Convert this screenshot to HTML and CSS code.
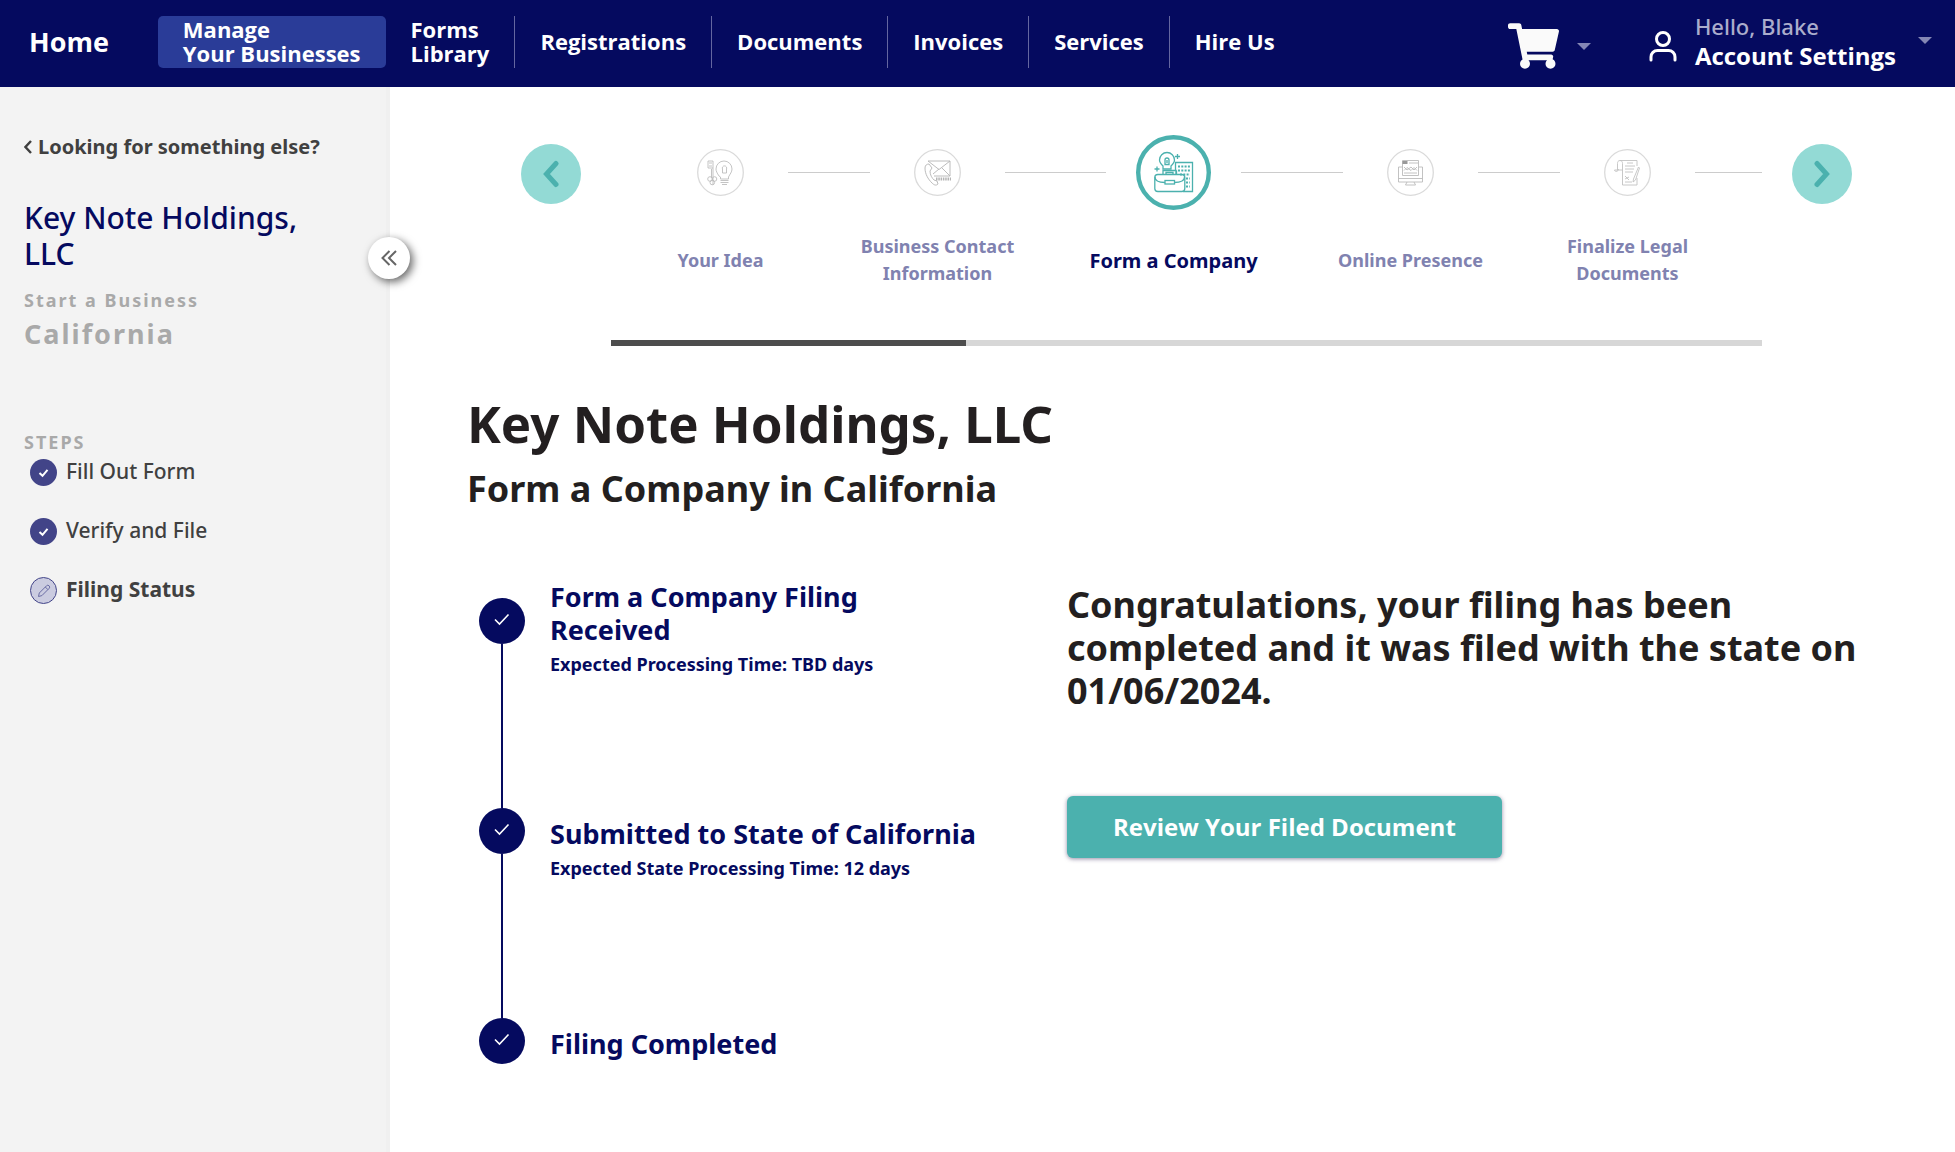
FILE: index.html
```html
<!DOCTYPE html>
<html lang="en">
<head>
<meta charset="utf-8">
<meta name="viewport" content="width=device-width, initial-scale=1">
<title>Filing Status - Key Note Holdings, LLC</title>
<link rel="stylesheet" href="styles.css">
</head>
<body>
<header class="topbar">
  <a class="home" href="#">Home</a>
  <nav class="nav" aria-label="Main">
    <a class="nav-item nav-item-active" href="#">Manage<br>Your Businesses</a>
    <a class="nav-item" href="#">Forms<br>Library</a>
    <a class="nav-item nav-item-ruled" href="#">Registrations</a>
    <a class="nav-item nav-item-ruled" href="#">Documents</a>
    <a class="nav-item nav-item-ruled" href="#">Invoices</a>
    <a class="nav-item nav-item-ruled" href="#">Services</a>
    <a class="nav-item nav-item-ruled" href="#">Hire Us</a>
  </nav>
  <div class="actions">
    <button class="cart" type="button" aria-label="Cart">
      <svg width="51" height="46" viewBox="0 0 576 512" fill="#fafafa" aria-hidden="true"><path d="M528.12 301.319l47.273-208C578.806 78.301 567.391 64 551.99 64H159.208l-9.166-44.81C147.758 8.021 137.93 0 126.529 0H24C10.745 0 0 10.745 0 24v16c0 13.255 10.745 24 24 24h69.883l70.248 343.435C147.325 417.1 136 435.222 136 456c0 30.928 25.072 56 56 56s56-25.072 56-56c0-15.674-6.447-29.835-16.824-40h209.647C430.447 426.165 424 440.326 424 456c0 30.928 25.072 56 56 56s56-25.072 56-56c0-22.172-12.888-41.332-31.579-50.405l5.517-24.276c3.413-15.018-8.002-29.319-23.403-29.319H218.117l-6.545-32h293.145c11.206 0 20.92-7.754 23.403-18.681z"/></svg>
      <span class="caret"></span>
    </button>
    <button class="account" type="button">
      <svg width="28" height="32" viewBox="0 0 28 32" fill="none" stroke="#fff" stroke-width="3" stroke-linecap="round" aria-hidden="true"><circle cx="14" cy="9" r="6.5"/><path d="M2 30v-3a6.500 6.500 0 0 1 6.500-6.500h11a6.500 6.500 0 0 1 6.500 6.500v3"/></svg>
      <span class="account-text"><span class="hello">Hello, Blake</span><span class="settings">Account Settings</span></span>
      <span class="caret caret-high"></span>
    </button>
  </div>
</header>
<div class="layout">
  <aside class="sidebar">
    <a class="back" href="#"><svg width="8" height="14" viewBox="0 0 8 14" fill="none" stroke="#404040" stroke-width="2.400" aria-hidden="true"><path d="M7 1 1.500 7 7 13"/></svg>Looking for something else?</a>
    <h2 class="company">Key Note Holdings, LLC</h2>
    <p class="eyebrow">Start a Business</p>
    <p class="state">California</p>
    <h3 class="eyebrow steps-title">STEPS</h3>
    <ul class="steps">
      <li><a class="step" href="#"><svg width="27" height="27" viewBox="0 0 27 27" aria-hidden="true"><circle cx="13.500" cy="13.500" r="13.500" fill="#424488"/><path d="m9.500 14 3 2.800 5-6" fill="none" stroke="#fff" stroke-width="2"/></svg>Fill Out Form</a></li>
      <li><a class="step" href="#"><svg width="27" height="27" viewBox="0 0 27 27" aria-hidden="true"><circle cx="13.500" cy="13.500" r="13.500" fill="#424488"/><path d="m9.500 14 3 2.800 5-6" fill="none" stroke="#fff" stroke-width="2"/></svg>Verify and File</a></li>
      <li><a class="step step-current" href="#"><svg width="27" height="27" viewBox="0 0 27 27" aria-hidden="true"><circle cx="13.500" cy="13.500" r="13" fill="#cbcce0" stroke="#424488"/><path d="m8.500 19.500.8-3.500 7.200-7.200a1.800 1.800 0 0 1 2.600 2.600l-7.200 7.200zM15.300 10l2.600 2.600" fill="none" stroke="#6a6ca4"/></svg>Filing Status</a></li>
    </ul>
    <button class="collapse" type="button" aria-label="Collapse sidebar"><svg width="16" height="16" viewBox="0 0 16 16" fill="none" stroke="#666" stroke-width="2" aria-hidden="true"><path d="M8.500 1 1.500 8l7 7M15 1 8 8l7 7"/></svg></button>
  </aside>
  <main class="main">
    <section class="carousel" aria-label="Progress">
      <button class="arrow" type="button" aria-label="Previous"><svg width="16" height="28" viewBox="0 0 16 28" fill="none" stroke="#4bb1ae" stroke-width="5" stroke-linecap="round" aria-hidden="true"><path d="M13 3.500 3.500 14 13 24.500"/></svg></button>
      <div class="track">
        <ol class="stages">
          <li class="stage">
            <span class="disc"><svg width="47" height="47" viewBox="0 0 47 47" fill="none" stroke="#bdbdbd" stroke-width=".9" aria-hidden="true"><circle cx="23.500" cy="23.500" r="22.800" stroke="#dadada" stroke-width="1.300"/><path d="M11 12h5v24M11 12v7h5M12 14h3M12 17h3M14.500 20v9M22 27c-2-3-3-5-3-7a8 8 0 0 1 16 0c0 3-2 5-3.500 8v2h-8v-2zM23.500 31.500h8M23.500 33.500h8M25 35.500h5M25.500 24v-4a2.200 2.200 0 1 1 4 0v4z"/><circle cx="13" cy="30" r="2.300"/><circle cx="17.500" cy="30" r="2.300"/><circle cx="15.300" cy="33.500" r="2.300"/></svg></span>
            <span class="label">Your Idea</span>
          </li>
          <li class="link" style="flex-grow: 82" aria-hidden="true"></li>
          <li class="stage">
            <span class="disc"><svg width="47" height="47" viewBox="0 0 47 47" fill="none" stroke="#b4b4b4" stroke-width=".9" aria-hidden="true"><circle cx="23.500" cy="23.500" r="22.800" stroke="#dadada" stroke-width="1.300"/><path d="M14 12h22v15H20M14 12l11 8.500L36 12M36 27l-8-8M19 25l6-5M11 19c0-3 2-4 4-4l3 4-2 3c0 4 2 7 4 9l3 1 1 3c-2 2-4 1-6-1-4-4-7-9-7-15z"/><path d="M22 30h15" stroke-width="3" stroke-dasharray="1.500 .8"/></svg></span>
            <span class="label">Business Contact<br>Information</span>
          </li>
          <li class="link" style="flex-grow: 101" aria-hidden="true"></li>
          <li class="stage stage-active">
            <span class="disc"><svg width="75" height="75" viewBox="0 0 75 75" fill="none" stroke="#4bb1ae" stroke-width="1.300" aria-hidden="true"><circle cx="37.500" cy="37.500" r="35.300" stroke-width="4.400"/><path d="M27 34v-3c-2-2-3.500-3.500-3.500-6a7.500 7.500 0 0 1 15 0c0 2.500-1.500 4-3.500 6v3z"/><path d="M29 29.500v-4.500a2 2 0 1 1 4 0v4.500zM31 25v3M27 39.500v-4h13v4M30 39.500v-2h7v2"/><rect x="18.800" y="39.500" width="30" height="17" rx="3"/><path d="M19 42c0 4 4 5.500 10 5.500h9c6 0 10.500-1.500 10.500-5.500M41.500 19v5M39 21.500h5M21 31.500v5M18.500 34h5M39.500 35v-7.500h17V56.500H47M40.500 35.500v4"/><rect x="29" y="45.500" width="9.500" height="3.500" fill="#fff"/><path d="M42 31.500h12M42 35.500h12M44 39.500h10M50 43.500h4M50 47.500h4M50 51.500h4" stroke-width="2" stroke-dasharray="2 1.300"/></svg></span>
            <span class="label">Form a Company</span>
          </li>
          <li class="link" style="flex-grow: 102" aria-hidden="true"></li>
          <li class="stage">
            <span class="disc"><svg width="47" height="47" viewBox="0 0 47 47" fill="none" stroke="#bbb" stroke-width=".9" aria-hidden="true"><circle cx="23.500" cy="23.500" r="22.800" stroke="#dadada" stroke-width="1.300"/><path d="M15.500 11.500h16v15h-16zM15.500 18h-4v15h24V18h-4M11.500 29.500h24M20 33l-1.500 3h10L27 33M17 18l3 3 4-3 3 3 3-3M17 21.500l3-3 4 3 3-3 3 3M17 24h13M22 14h9"/><path d="M15.500 13.500h5" stroke="#999" stroke-width="3"/></svg></span>
            <span class="label">Online Presence</span>
          </li>
          <li class="link" style="flex-grow: 82" aria-hidden="true"></li>
          <li class="stage">
            <span class="disc"><svg width="47" height="47" viewBox="0 0 47 47" fill="none" stroke="#c2c2c2" stroke-width=".9" aria-hidden="true"><circle cx="23.500" cy="23.500" r="22.800" stroke="#dadada" stroke-width="1.300"/><path d="M33 17v-5.500H16c-2 0-2.500 1.500-2.500 3V21h-3c0 2 4 2 4-1M18.500 21v15H33v-7M16 11.500c2 0 2.500 1.500 2.500 3V21h-5M23 14h6M21 17h10M21 20h9M21 23h8M21 33h7M21 27l4 4M21 30l4-2M34.500 18l-5 12-.5 3 2.500-2 4-12z"/></svg></span>
            <span class="label">Finalize Legal<br>Documents</span>
          </li>
          <li class="link" style="flex-grow: 67" aria-hidden="true"></li>
        </ol>
        <div class="progress"><div class="progress-fill" style="width: 30.8%"></div></div>
      </div>
      <button class="arrow" type="button" aria-label="Next"><svg width="16" height="28" viewBox="0 0 16 28" fill="none" stroke="#4bb1ae" stroke-width="5" stroke-linecap="round" aria-hidden="true"><path d="M3 3.500 12.500 14 3 24.500"/></svg></button>
    </section>
    <h1 class="title">Key Note Holdings, LLC</h1>
    <h2 class="subtitle">Form a Company in California</h2>
    <div class="columns">
      <ol class="timeline">
        <li class="event event-tall">
          <div class="marker"><svg class="dot" width="46" height="46" viewBox="0 0 46 46" aria-hidden="true"><circle cx="23" cy="23" r="23" fill="#050a5f"/><path d="m16 21.500 4.500 4.500 9-9.500" fill="none" stroke="#fff" stroke-width="1.600"/></svg></div>
          <div class="event-text"><h3>Form a Company Filing<br>Received</h3><p>Expected Processing Time: TBD days</p></div>
        </li>
        <li class="event">
          <div class="marker"><svg class="dot" width="46" height="46" viewBox="0 0 46 46" aria-hidden="true"><circle cx="23" cy="23" r="23" fill="#050a5f"/><path d="m16 21.500 4.500 4.500 9-9.500" fill="none" stroke="#fff" stroke-width="1.600"/></svg></div>
          <div class="event-text"><h3>Submitted to State of California</h3><p>Expected State Processing Time: 12 days</p></div>
        </li>
        <li class="event">
          <div class="marker"><svg class="dot" width="46" height="46" viewBox="0 0 46 46" aria-hidden="true"><circle cx="23" cy="23" r="23" fill="#050a5f"/><path d="m16 21.500 4.500 4.500 9-9.500" fill="none" stroke="#fff" stroke-width="1.600"/></svg></div>
          <div class="event-text"><h3>Filing Completed</h3></div>
        </li>
      </ol>
      <section class="result">
        <h2 class="message">Congratulations, your filing has been completed and it was filed with the state on 01/06/2024.</h2>
        <button class="review" type="button">Review Your Filed Document</button>
      </section>
    </div>
  </main>
</div>
</body>
</html>
```

FILE: styles.css
```css
* { box-sizing: border-box; }

body {
  margin: 0;
  min-height: 100vh;
  display: flex;
  flex-direction: column;
  font-family: "Noto Sans", "Open Sans", sans-serif;
  color: #231f20;
  background: #fff;
}

h1, h2, h3, p, ul, ol { margin: 0; padding: 0; }
ul, ol { list-style: none; }
a { color: inherit; text-decoration: none; }
svg { display: block; flex: none; }

button {
  padding: 0;
  border: 0;
  background: none;
  color: inherit;
  font-family: inherit;
  cursor: pointer;
}

/* Top bar */
.topbar {
  display: flex;
  align-items: flex-start;
  padding: 16px 23px 19px 29px;
  background: #050a5f;
  color: #fff;
  white-space: nowrap;
}

.home,
.nav-item,
.settings,
.review {
  font-family: "Open Sans", "Noto Sans", sans-serif;
  font-weight: 700;
}

.home {
  margin-right: 49px;
  font-size: 27px;
  line-height: 52px;
}

.nav { display: flex; }

.nav-item {
  display: flex;
  align-items: center;
  height: 52px;
  padding: 0 25px 2px;
  font-size: 22px;
  line-height: 24px;
}

.nav-item-active {
  border-radius: 5px;
  background: #2a3c98;
}

.nav-item-ruled { border-left: 1px solid #6466a0; }

.actions {
  display: flex;
  align-items: center;
  gap: 58px;
  height: 52px;
  margin-left: auto;
}

.cart, .account {
  display: flex;
  align-items: center;
  padding-top: 8px;
}

.cart { gap: 18px; }

.caret {
  border: 7px solid transparent;
  border-top-color: #8587b5;
  border-bottom: 0;
}

.caret-high { margin: 0 0 12px 22px; }

.account-text {
  display: flex;
  flex-direction: column;
  margin: 0 0 11px 18px;
  line-height: 29px;
  text-align: left;
}

.hello { font-size: 22px; font-weight: 500; color: #abadcc; }
.settings { font-size: 24px; }

.layout {
  display: flex;
  flex: 1;
}

/* Sidebar */
.sidebar {
  position: relative;
  flex: none;
  width: 390px;
  padding: 46px 60px 40px 24px;
  border-right: 4px solid #f0f0f0;
  background: #f3f3f3;
}

.back {
  display: flex;
  align-items: center;
  gap: 6px;
  font-size: 20px;
  font-weight: 700;
  line-height: 28px;
  color: #404040;
  white-space: nowrap;
}

.company {
  margin-top: 39px;
  font-size: 30px;
  font-weight: 500;
  line-height: 36px;
  color: #050a5f;
}

.eyebrow {
  margin-top: 16px;
  font-size: 18px;
  font-weight: 700;
  line-height: 24px;
  letter-spacing: 2px;
  color: #a9a9a9;
}

.state {
  margin-top: 4px;
  font-size: 27px;
  font-weight: 700;
  line-height: 36px;
  letter-spacing: 2px;
  color: #a9a9a9;
}

.steps-title { margin-top: 78px; }

.steps {
  display: flex;
  flex-direction: column;
  gap: 32px;
  padding: 5px 0 0 6px;
}

.step {
  display: flex;
  gap: 9px;
  height: 27px;
  font-size: 21px;
  font-weight: 500;
  line-height: 24px;
  color: #404040;
}

.step-current { font-weight: 700; }

.collapse {
  position: absolute;
  top: 150px;
  right: -24px;
  display: grid;
  place-items: center;
  width: 42px;
  height: 42px;
  border-radius: 50%;
  background: #fff;
  box-shadow: 3px 3px 8px rgba(0, 0, 0, .6);
}

/* Main */
.main {
  flex: 1;
  min-width: 0;
  padding: 48px 77px 60px;
}

.carousel {
  display: flex;
  gap: 30px;
  padding: 0 26px 0 54px;
}

.arrow {
  display: grid;
  place-items: center;
  flex: none;
  width: 60px;
  height: 60px;
  margin-top: 9px;
  border-radius: 50%;
  background: #93dad5;
}

.track { flex: 1; min-width: 0; }

.stages {
  display: flex;
  padding-left: 42px;
}

.stage {
  display: flex;
  flex: none;
  flex-direction: column;
  align-items: center;
  width: 135px;
}

.disc {
  display: grid;
  place-items: center;
  height: 75px;
}

.label {
  display: flex;
  align-items: center;
  height: 54px;
  margin-top: 23px;
  font-size: 18px;
  font-weight: 700;
  line-height: 27px;
  color: #8082b0;
  text-align: center;
  white-space: nowrap;
}

.stage-active .label {
  font-size: 20px;
  color: #050a5f;
}

.link {
  flex: 1 1 0;
  height: 1px;
  margin-top: 37px;
  background: #ccc;
}

.progress {
  height: 6px;
  margin-top: 53px;
  background: #d7d7d7;
}

.progress-fill {
  height: 100%;
  background: #4d4d4d;
}

.title {
  margin-top: 47px;
  font-size: 51px;
  font-weight: 700;
  line-height: 60px;
}

.subtitle {
  margin-top: 14px;
  font-size: 36px;
  font-weight: 700;
  line-height: 44px;
}

.columns {
  display: grid;
  grid-template-columns: 600fr 811fr;
  margin-top: 69px;
}

.event {
  display: flex;
  gap: 25px;
  min-height: 210px;
  padding-left: 12px;
  color: #050a5f;
}

.event-tall { min-height: 228px; }
.event:last-child { min-height: 0; }

.marker {
  display: flex;
  flex-direction: column;
  align-items: center;
}

.event-tall .marker { padding-top: 18px; }

.marker::after {
  content: "";
  flex: 1;
  width: 2px;
  background: #050a5f;
}

.event:last-child .marker::after { display: none; }

.event-text { padding-top: 9px; }
.event-tall .event-text { padding-top: 0; }

.event h3 {
  font-size: 27px;
  font-weight: 700;
  line-height: 33px;
}

.event p {
  margin-top: 6px;
  font-size: 18px;
  font-weight: 700;
  line-height: 24px;
}

.message {
  padding-top: 3px;
  font-size: 36px;
  font-weight: 700;
  line-height: 43px;
}

.review {
  height: 62px;
  margin-top: 84px;
  padding: 0 46px 2px;
  border-radius: 6px;
  background: #4bb1ae;
  box-shadow: 0 1px 4px rgba(40, 30, 80, .5);
  color: #fff;
  font-size: 24px;
}
```
